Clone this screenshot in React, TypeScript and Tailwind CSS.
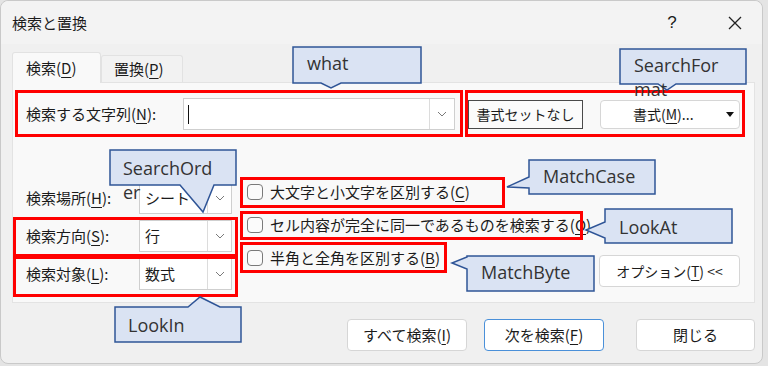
import React from "react";

const U = ({ c }: { c: string }) => (
  <span className="underline underline-offset-[3px] decoration-1">{c}</span>
);

const Chev = () => (
  <svg width="10" height="6" viewBox="0 0 10 6">
    <polyline points="1,1 5,5 9,1" fill="none" stroke="#7a7a7a" strokeWidth="1" />
  </svg>
);

const Select = ({ v }: { v: string }) => (
  <div className="flex h-[32px] w-[93px] bg-white border border-[#cfcfcf]">
    <span className="flex-1 pl-[5px] flex items-center text-[15px]">{v}</span>
    <span className="w-[24px] border-l border-[#dcdcdc] flex items-center justify-center">
      <Chev />
    </span>
  </div>
);

const Check = ({ children }: { children: React.ReactNode }) => (
  <div className="flex items-center h-[33px]">
    <span className="w-[16px] h-[16px] rounded-[4px] border border-[#7a7a7a] bg-[#fbfbfb]" />
    <span className="ml-[7px] text-[15px] leading-[20px]">{children}</span>
  </div>
);

const Btn = ({ children, cls }: { children: React.ReactNode; cls: string }) => (
  <div className={"h-[32px] flex items-center justify-center bg-white rounded-[4px] border text-[15px] " + cls}>
    {children}
  </div>
);

type Co = { pts: string; lines: string[]; left: number; top: number };
const callouts: Co[] = [
  { pts: "293,47 421,47 421,83 341,83 331,88 321,83 293,83", lines: ["what"], left: 307, top: 51 },
  { pts: "620,49 746,49 746,84 676,84 667,90 658,84 620,84", lines: ["SearchFor", "mat"], left: 634, top: 53 },
  { pts: "110,150 236,150 236,185 214,185 203,212 180,185 110,185", lines: ["SearchOrd", "er"], left: 123, top: 156 },
  { pts: "529,160 655,160 655,194 529,194 529,188 507,187 529,177", lines: ["MatchCase"], left: 543, top: 164 },
  { pts: "605,209 732,209 732,243 605,243 605,238 586,230 605,222", lines: ["LookAt"], left: 619, top: 215 },
  { pts: "467,256 594,256 594,291 467,291 467,269 452,263 467,257", lines: ["MatchByte"], left: 481, top: 260 },
  { pts: "115,307 188,307 200,297 220,307 241,307 241,342 115,342", lines: ["LookIn"], left: 128, top: 313 },
];

const reds = [
  { l: 15, t: 90, w: 448, h: 47 },
  { l: 465, t: 90, w: 280, h: 47 },
  { l: 13, t: 217, w: 225, h: 40 },
  { l: 13, t: 256, w: 225, h: 41 },
  { l: 240, t: 177, w: 265, h: 31 },
  { l: 240, t: 211, w: 343, h: 29 },
  { l: 240, t: 242, w: 207, h: 31 },
];

export default function App() {
  return (
    <div className="relative w-[768px] h-[366px] bg-[#e4e4e4] overflow-hidden font-['Noto_Sans_CJK_JP','Noto_Sans',sans-serif] text-[#1b1b1b]">
      <div className="w-[763px] h-[364px] rounded-[8px] border border-[#c9c9c9] bg-[#f0f0f0] flex flex-col">
        {/* title bar */}
        <div className="h-[43px] flex items-center pl-[11px] pr-[10px] bg-[#f3f3f3] rounded-t-[8px]">
          <span className="text-[15px] leading-[20px]">検索と置換</span>
          <span className="ml-auto w-[30px] text-center text-[17px] font-['Liberation_Sans',sans-serif]">?</span>
          <span className="ml-[31px] w-[34px] flex justify-center">
            <svg width="14" height="14" viewBox="0 0 14 14">
              <path d="M1 1 L13 13 M13 1 L1 13" stroke="#222" strokeWidth="1.3" />
            </svg>
          </span>
        </div>
        {/* tabs */}
        <div className="mt-[8px] ml-[11px] flex items-end h-[30px]">
          <div className="relative z-10 -mb-px w-[89px] h-[31px] bg-[#f9f9f9] border border-b-0 border-[#e2e2e2] rounded-t-[3px] pl-[13px] flex items-center text-[15px]">
            検索(<U c="D" />)
          </div>
          <div className="w-[82px] h-[27px] bg-[#f2f2f2] border border-b-0 border-[#e2e2e2] rounded-t-[3px] pl-[12px] flex items-center text-[15px]">
            置換(<U c="P" />)
          </div>
        </div>
        {/* panel */}
        <div className="ml-[11px] w-[743px] h-[221px] bg-[#f9f9f9] border border-[#e3e3e3] flex flex-col">
          <div className="mt-[15px] flex items-center h-[32px] pl-[13px]">
            <span className="w-[157px] text-[15px] leading-[20px]">
              検索する文字列(<U c="N" />):
            </span>
            <div className="flex w-[272px] h-[32px] bg-white border border-[#cfcfcf]">
              <span className="flex-1 flex items-center pl-[4px]">
                <span className="w-px h-[19px] bg-[#111]" />
              </span>
              <span className="w-[25px] border-l border-[#dcdcdc] flex items-center justify-center">
                <Chev />
              </span>
            </div>
            <div className="ml-[13px] w-[115px] h-[29px] border border-[#4a4a4a] bg-[#fbfbfb] flex items-center justify-center text-[14px]">
              書式セットなし
            </div>
            <div className="ml-[17px] w-[140px] h-[29px] border border-[#d6d6d6] rounded-[4px] bg-white flex items-center text-[14px]">
              <span className="ml-[32px]">
                書式(<U c="M" />)...
              </span>
              <svg className="ml-auto mr-[5px]" width="8" height="5" viewBox="0 0 8 5">
                <polygon points="0,0 8,0 4,5" fill="#111" />
              </svg>
            </div>
          </div>
          <div className="flex">
            <div className="mt-[52px] ml-[13px] flex flex-col gap-[6px]">
              <div className="flex items-center h-[32px]">
                <span className="w-[113px] text-[15px] leading-[20px]">
                  検索場所(<U c="H" />):
                </span>
                <Select v="シート" />
              </div>
              <div className="flex items-center h-[32px]">
                <span className="w-[113px] text-[15px] leading-[20px]">
                  検索方向(<U c="S" />):
                </span>
                <Select v="行" />
              </div>
              <div className="flex items-center h-[32px]">
                <span className="w-[113px] text-[15px] leading-[20px]">
                  検索対象(<U c="L" />):
                </span>
                <Select v="数式" />
              </div>
            </div>
            <div className="mt-[45px] ml-[15px] w-[493px] flex flex-col">
              <Check>
                大文字と小文字を区別する(<U c="C" />)
              </Check>
              <Check>
                セル内容が完全に同一であるものを検索する(<U c="O" />)
              </Check>
              <div className="flex items-start">
                <Check>
                  半角と全角を区別する(<U c="B" />)
                </Check>
                <div className="ml-auto mt-[14px] w-[141px] h-[32px] bg-white border border-[#d6d6d6] rounded-[4px] flex items-center justify-center text-[14px]">
                  オプション(<U c="T" />) &lt;&lt;
                </div>
              </div>
            </div>
          </div>
        </div>
        {/* bottom buttons */}
        <div className="mt-[16px] flex justify-end pr-[7px]">
          <Btn cls="w-[120px] border-[#d6d6d6]">
            すべて検索(<U c="I" />)
          </Btn>
          <Btn cls="ml-[17px] w-[120px] border-[#4a90d9]">
            次を検索(<U c="F" />)
          </Btn>
          <Btn cls="ml-[32px] w-[119px] border-[#d6d6d6]">閉じる</Btn>
        </div>
      </div>

      {/* annotation overlay */}
      {reds.map((r, i) => (
        <div
          key={i}
          className="absolute border-[3px] border-[#ff0000] pointer-events-none"
          style={{ left: r.l, top: r.t, width: r.w, height: r.h }}
        />
      ))}
      <svg className="absolute left-0 top-0 pointer-events-none" width="768" height="366">
        {callouts.map((c, i) => (
          <polygon key={i} points={c.pts} fill="#dae3f3" stroke="#2f5597" strokeWidth="1.5" strokeLinejoin="miter" />
        ))}
      </svg>
      {callouts.map((c, i) => (
        <div
          key={i}
          className="absolute font-['Open_Sans',sans-serif] text-[18px] leading-[24px] text-[#333] whitespace-nowrap pointer-events-none"
          style={{ left: c.left, top: c.top }}
        >
          {c.lines.map((l, j) => (
            <div key={j}>{l}</div>
          ))}
        </div>
      ))}
    </div>
  );
}
